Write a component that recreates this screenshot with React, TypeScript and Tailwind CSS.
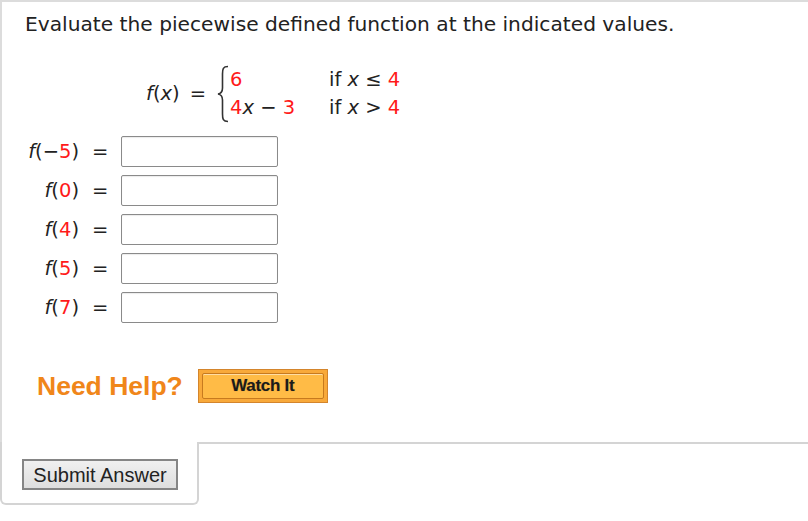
import React from 'react';

const red = 'text-[#ff1a1a]';

function Brace() {
  return (
    <svg width="12" height="58" viewBox="0 0 12 58" className="shrink-0">
      <path
        d="M11 1.5 C6 1.5 5.5 4 5.5 9 L5.5 23 C5.5 27 4 28.5 1 29 C4 29.5 5.5 31 5.5 35 L5.5 49 C5.5 54 6 56.5 11 56.5"
        fill="none"
        stroke="#333"
        strokeWidth="1.6"
      />
    </svg>
  );
}

const rows: { pre?: string; num: string }[] = [
  { pre: '−', num: '5' },
  { num: '0' },
  { num: '4' },
  { num: '5' },
  { num: '7' },
];

export default function App() {
  return (
    <div className="w-[808px] h-[521px] bg-white overflow-hidden font-['DejaVu_Sans',Verdana,sans-serif] text-[#222]">
      <div className="border-t-2 border-[#dcdcdc]">
        {/* Question body */}
        <div className="border-l-2 border-[#dcdcdc] h-[440px] pl-[23px] pt-[10px]">
          <p className="text-[20.2px] leading-[25px]">
            Evaluate the piecewise defined function at the indicated values.
          </p>

          {/* Piecewise definition */}
          <div className="mt-[28px] ml-[121px] flex items-center text-[19.5px]">
            <span>
              <i>f</i>(<i>x</i>)
            </span>
            <span className="ml-[10px] mr-[11px]">=</span>
            <Brace />
            <div className="ml-[1px] grid grid-cols-[99px_auto] leading-[28px]">
              <span className={red}>6</span>
              <span>
                if <i>x</i> ≤ <span className={red}>4</span>
              </span>
              <span>
                <span className={red}>4</span>
                <i>x</i> − <span className={red}>3</span>
              </span>
              <span>
                if <i>x</i> &gt; <span className={red}>4</span>
              </span>
            </div>
          </div>

          {/* Answer rows */}
          <div className="mt-[13px] flex flex-col gap-[8px]">
            {rows.map((r, i) => (
              <div key={i} className="flex items-center text-[19.5px]">
                <span className="w-[55px] -ml-[1px] text-right whitespace-nowrap">
                  <i>f</i>({r.pre}
                  <span className={red}>{r.num}</span>)
                </span>
                <span className="ml-[13px] w-[11px]">=</span>
                <input
                  type="text"
                  className="ml-[18px] w-[157px] h-[31px] border border-[#8a8a8a] rounded-[2px] bg-white shadow-[inset_0_1px_1px_rgba(0,0,0,0.08)]"
                />
              </div>
            ))}
          </div>

          {/* Help */}
          <div className="mt-[46px] ml-[12px] flex items-center">
            <span className="font-['Liberation_Sans',Arial,sans-serif] font-bold text-[26.5px] leading-none text-[#f0861a]">
              Need Help?
            </span>
            <button className="ml-[15px] w-[130px] h-[34px] border border-[#d4852c] bg-[#f8a93a] p-[3px]">
              <span className="flex h-full w-full items-center justify-center border border-[#c77a1e] rounded-[2px] bg-[#ffbb46] shadow-[inset_0_1px_0_rgba(255,255,255,0.5)] font-['Liberation_Sans',Arial,sans-serif] font-bold text-[17px] tracking-[-0.3px] text-[#1b1b1b] [text-shadow:0_0_1px_rgba(0,0,0,0.3)]">
                Watch It
              </span>
            </button>
          </div>
        </div>

        {/* Bottom tab */}
        <div className="flex">
          <div className="w-[199px] h-[63px] border-l-2 border-r-2 border-b-2 border-[#d4d4d4] rounded-b-[6px] pl-[20px] pt-[17px]">
            <button className="w-[156px] h-[31px] border-2 border-[#858585] bg-gradient-to-b from-[#f0f0f0] to-[#dedede] font-['Liberation_Sans',Arial,sans-serif] text-[20px] leading-none text-[#222]">
              Submit Answer
            </button>
          </div>
          <div className="flex-1 border-t-2 border-[#d4d4d4]" />
        </div>
      </div>
    </div>
  );
}
